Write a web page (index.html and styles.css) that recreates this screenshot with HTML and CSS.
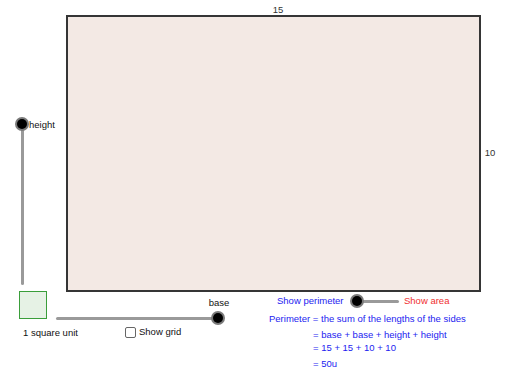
FILE: index.html
```html
<!DOCTYPE html>
<html>
<head>
<meta charset="utf-8">
<link rel="stylesheet" href="styles.css">
</head>
<body>
<div class="canvas">
  <div class="rect"></div>
  <span class="lbl c dim base-len">15</span>
  <span class="lbl c dim height-len">10</span>

  <div class="track vtrack"></div>
  <div class="knob knob-height"></div>
  <span class="lbl l height-lbl">height</span>

  <div class="unit"></div>
  <span class="lbl l unit-lbl">1 square unit</span>

  <div class="track btrack"></div>
  <div class="knob knob-base"></div>
  <span class="lbl c base-lbl">base</span>

  <label class="grid-toggle">
    <span class="box"></span>
    <span>Show grid</span>
  </label>

  <span class="lbl l blue show-per">Show perimeter</span>
  <div class="track ptrack"></div>
  <div class="knob knob-per"></div>
  <span class="lbl l red show-area">Show area</span>

  <span class="lbl l blue f1">Perimeter = the sum of the lengths of the sides</span>
  <span class="lbl l blue f2">= base + base + height + height</span>
  <span class="lbl l blue f3">= 15 + 15 + 10 + 10</span>
  <span class="lbl l blue f4">= 50u</span>
</div>
</body>
</html>
```

FILE: styles.css
```css
html, body {
  margin: 0;
  padding: 0;
  background: #fff;
}
.canvas {
  position: relative;
  width: 512px;
  height: 381px;
  overflow: hidden;
  font-family: "Liberation Sans", Arial, sans-serif;
  font-size: 9.5px;
  color: #111;
}
.rect {
  position: absolute;
  left: 66px;
  top: 15px;
  width: 411px;
  height: 273px;
  border: 2px solid #353535;
  background: #f3e9e4;
}
.lbl {
  position: absolute;
  line-height: 12px;
  white-space: nowrap;
}
.lbl.c { transform: translate(-50%, -50%); }
.lbl.l { transform: translateY(-50%); }
.dim { color: #333; }
.blue { color: #1c1cf0; }
.red { color: #f03030; }

.base-len { left: 278px; top: 10px; }
.height-len { left: 490px; top: 153px; }
.height-lbl { left: 29px; top: 125px; }
.unit-lbl { left: 23px; top: 333px; }
.base-lbl { left: 219px; top: 303px; }
.show-per { left: 277px; top: 301px; }
.show-area { left: 404px; top: 301px; }
.f1 { left: 269px; top: 319px; }
.f2 { left: 313px; top: 335px; }
.f3 { left: 313px; top: 348px; }
.f4 { left: 313px; top: 364px; }

.track {
  position: absolute;
  background: #9a9a9a;
  border-radius: 2px;
}
.vtrack {
  left: 21px;
  top: 124px;
  width: 3px;
  height: 161px;
}
.btrack {
  left: 56px;
  top: 317px;
  width: 162px;
  height: 3px;
}
.ptrack {
  left: 357px;
  top: 300px;
  width: 42px;
  height: 3px;
}
.knob {
  position: absolute;
  width: 10px;
  height: 10px;
  margin: -5px 0 0 -5px;
  border-radius: 50%;
  background: #000;
  box-shadow: 0 0 0 2px #7a7a7a;
}
.knob-height { left: 22px; top: 124px; }
.knob-base { left: 218px; top: 318px; }
.knob-per { left: 357px; top: 301px; }

.unit {
  position: absolute;
  left: 19px;
  top: 291px;
  width: 26px;
  height: 26px;
  border: 1.5px solid #3a9e3a;
  background: #e6f2e5;
}
.grid-toggle {
  position: absolute;
  left: 125px;
  top: 326px;
  display: flex;
  align-items: center;
  gap: 3px;
  line-height: 12px;
}
.box {
  width: 9px;
  height: 9px;
  border: 1px solid #666;
  border-radius: 2px;
  background: #fff;
}
```
